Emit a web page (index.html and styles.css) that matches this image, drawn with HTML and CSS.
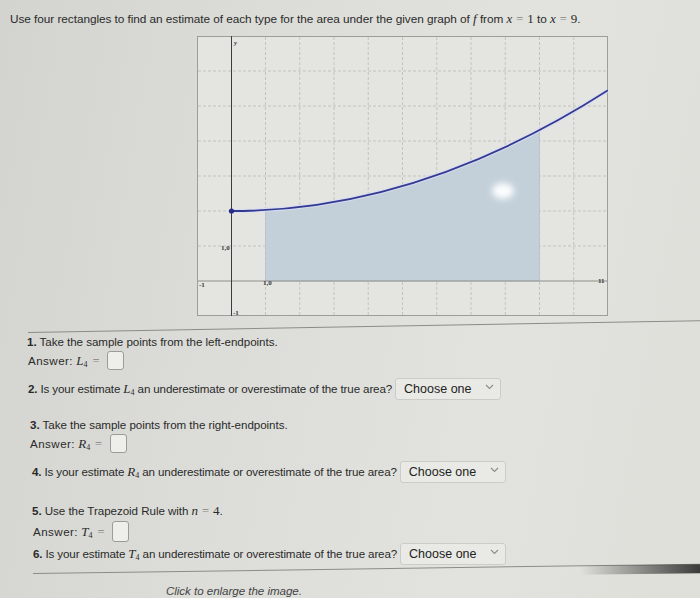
FILE: index.html
```html
<!DOCTYPE html>
<html>
<head>
<meta charset="utf-8">
<link rel="stylesheet" href="styles.css">
</head>
<body>
<div class="page">
  <p class="title">Use four rectangles to find an estimate of each type for the area under the given graph of <span class="m">f</span> from <span class="m">x</span><span class="eq">=</span><span class="num">1</span> to <span class="m">x</span><span class="eq">=</span><span class="num">9</span>.</p>

  <div class="graph">
    <svg width="411" height="280" viewBox="0 0 411 280" xmlns="http://www.w3.org/2000/svg">
      <defs>
        <filter id="blur" x="-50%" y="-50%" width="200%" height="200%"><feGaussianBlur stdDeviation="3"/></filter>
      </defs>
      <rect x="0.5" y="0.5" width="410" height="279" fill="#e4e5e1" stroke="#9d9e9a" stroke-width="1"/>
      <g stroke="#c2c3bf" stroke-width="1" stroke-dasharray="3 2">
        <line x1="68.5" y1="1" x2="68.5" y2="279"/>
        <line x1="102.75" y1="1" x2="102.75" y2="279"/>
        <line x1="137" y1="1" x2="137" y2="279"/>
        <line x1="171.25" y1="1" x2="171.25" y2="279"/>
        <line x1="205.5" y1="1" x2="205.5" y2="279"/>
        <line x1="239.75" y1="1" x2="239.75" y2="279"/>
        <line x1="274" y1="1" x2="274" y2="279"/>
        <line x1="308.25" y1="1" x2="308.25" y2="279"/>
        <line x1="342.5" y1="1" x2="342.5" y2="279"/>
        <line x1="376.75" y1="1" x2="376.75" y2="279"/>
        <line x1="1" y1="35" x2="410" y2="35"/>
        <line x1="1" y1="70" x2="410" y2="70"/>
        <line x1="1" y1="105" x2="410" y2="105"/>
        <line x1="1" y1="140" x2="410" y2="140"/>
        <line x1="1" y1="175" x2="410" y2="175"/>
        <line x1="1" y1="210" x2="410" y2="210"/>
      </g>
      <path d="M68.5,245 L68.5,174 Q205.5,166 342.5,94.2 L342.5,245 Z" fill="#c3d0da" stroke="#aebcc8" stroke-width="0.6"/>
      <line x1="1" y1="245" x2="410" y2="245" stroke="#8e8f8b" stroke-width="1.2"/>
      <line x1="34.5" y1="0" x2="34.5" y2="280" stroke="#3c3c3c" stroke-width="1"/>
      <path d="M34.25,175 Q222.6,175 411,54.3" fill="none" stroke="#d8dcf2" stroke-width="4" opacity="0.8"/>
      <path d="M34.25,175 Q222.6,175 411,54.3" fill="none" stroke="#333a92" stroke-width="1.8"/>
      <circle cx="34.5" cy="175" r="2.6" fill="#262c88"/>
      <ellipse cx="306" cy="155" rx="11" ry="8" fill="#ffffff" filter="url(#blur)" opacity="0.95"/>
      <g class="lbl">
        <text x="37" y="9" font-style="italic">y</text>
        <text x="24" y="214">1,0</text>
        <text x="2" y="251">-1</text>
        <text x="66" y="249">1,0</text>
        <text x="401" y="247">11</text>
        <text x="36" y="279">-1</text>
      </g>
    </svg>
  </div>

  <div class="rule rule-top"></div>

  <div class="questions">
    <div class="row q in0"><b>1.</b> Take the sample points from the left-endpoints.</div>
    <div class="row ans in1"><span class="lab">Answer:</span> <span class="m">L</span><sub>4</sub><span class="eq">=</span><span class="box"></span></div>
    <div class="row sel gap-s in1"><b>2.</b> Is your estimate <span class="m">L</span><sub>4</sub> an underestimate or overestimate of the true area?<span class="select">Choose one<svg width="9" height="6" viewBox="0 0 9 6"><path d="M1 1 L4.5 4.5 L8 1" fill="none" stroke="#8c8c88" stroke-width="1.1"/></svg></span></div>

    <div class="row q gap-m in2"><b>3.</b> Take the sample points from the right-endpoints.</div>
    <div class="row ans in2"><span class="lab">Answer:</span> <span class="m">R</span><sub>4</sub><span class="eq">=</span><span class="box"></span></div>
    <div class="row sel gap-s in3"><b>4.</b> Is your estimate <span class="m">R</span><sub>4</sub> an underestimate or overestimate of the true area?<span class="select">Choose one<svg width="9" height="6" viewBox="0 0 9 6"><path d="M1 1 L4.5 4.5 L8 1" fill="none" stroke="#8c8c88" stroke-width="1.1"/></svg></span></div>

    <div class="row q gap-l in3"><b>5.</b> Use the Trapezoid Rule with <span class="m">n</span><span class="eq">=</span><span class="num">4</span>.</div>
    <div class="row ans gap-xs in4"><span class="lab">Answer:</span> <span class="m">T</span><sub>4</sub><span class="eq">=</span><span class="box box-tall"></span></div>
    <div class="row sel gap-xs in4"><b>6.</b> Is your estimate <span class="m">T</span><sub>4</sub> an underestimate or overestimate of the true area?<span class="select">Choose one<svg width="9" height="6" viewBox="0 0 9 6"><path d="M1 1 L4.5 4.5 L8 1" fill="none" stroke="#8c8c88" stroke-width="1.1"/></svg></span></div>
  </div>

  <div class="rule rule-bottom"></div>
  <div class="enlarge">Click to enlarge the image.</div>
  <div class="edge"></div>
</div>
</body>
</html>
```

FILE: styles.css
```css
* { box-sizing: border-box; }
html, body { margin: 0; padding: 0; }
body {
  width: 700px;
  height: 598px;
  overflow: hidden;
  font-family: "Liberation Sans", Arial, sans-serif;
  font-size: 11.6px;
  letter-spacing: -0.05px;
  color: #2a2a2a;
  background: linear-gradient(100deg, #d3d4cf 0%, #dcddd8 35%, #e2e3de 70%, #dedfd9 100%);
}
.page { position: relative; width: 700px; height: 598px; }

.title {
  margin: 0;
  padding: 12px 0 0 10px;
  line-height: 13px;
  font-size: 11.8px;
  white-space: nowrap;
}

.m {
  font-family: "Liberation Serif", "Times New Roman", serif;
  font-style: italic;
  font-size: 13px;
  letter-spacing: 0;
}
.num {
  font-family: "Liberation Serif", "Times New Roman", serif;
  font-size: 13px;
  letter-spacing: 0;
}
.eq {
  font-family: "Liberation Serif", serif;
  color: #858682;
  font-size: 12.5px;
  margin: 0 4px;
}
sub {
  font-family: "Liberation Serif", serif;
  font-size: 8px;
  vertical-align: -2px;
  line-height: 0;
}

.graph {
  margin: 10px 0 0 197px;
  width: 411px;
  height: 280px;
}
.graph svg { display: block; }
.lbl text {
  font-family: "Liberation Serif", serif;
  font-size: 7px;
  font-weight: bold;
  fill: #3a3a3a;
}

.rule {
  height: 0;
  border-top: 1.5px solid #8b8c88;
  transform-origin: left center;
}
.rule-top {
  margin: 16px 0 0 28px;
  width: 690px;
  transform: rotate(-1deg);
}
.rule-bottom {
  margin: 8px 0 0 33px;
  width: 690px;
  transform: rotate(-0.8deg);
}

.questions { padding-left: 27px; }
.row { white-space: nowrap; }
.row b { font-weight: bold; }
.q { height: 18px; line-height: 18px; }
.ans { height: 19px; line-height: 19px; }
.ans .lab { letter-spacing: 0.45px; }
.ans .eq { margin: 0 5px; }
.sel { height: 22px; line-height: 22px; letter-spacing: -0.13px; }
.gap-xs { margin-top: 2px; }
.gap-s { margin-top: 8px; }
.gap-m { margin-top: 16px; }
.gap-l { margin-top: 19px; }
.in0 { margin-left: 0; }
.in1 { margin-left: 1px; }
.in2 { margin-left: 3px; }
.in3 { margin-left: 5px; }
.in4 { margin-left: 6px; }

.box {
  display: inline-block;
  vertical-align: middle;
  width: 17px;
  height: 19px;
  margin: -2px 0 0 3px;
  border: 1px solid #9b9c98;
  border-radius: 3px;
  background: #eeeeea;
}
.box-tall { height: 21px; }

.select {
  display: inline-flex;
  vertical-align: middle;
  align-items: center;
  justify-content: space-between;
  width: 106px;
  height: 22px;
  margin: -2px 0 0 3px;
  padding: 0 6px 0 8px;
  border: 1px solid #cbccc7;
  border-radius: 3px;
  background: #e9eae5;
  font-size: 12.5px;
  letter-spacing: 0;
  color: #222;
  line-height: 20px;
}
.select svg { margin-top: -3px; }

.enlarge {
  margin: 10px 0 0 166px;
  font-size: 11.6px;
  line-height: 13px;
  color: #444;
  font-style: italic;
}
.edge {
  position: absolute;
  right: 0;
  top: 565px;
  width: 120px;
  height: 9px;
  background: linear-gradient(to right, rgba(30,30,30,0), rgba(30,30,30,0.85));
  transform: rotate(-0.8deg);
}
```
